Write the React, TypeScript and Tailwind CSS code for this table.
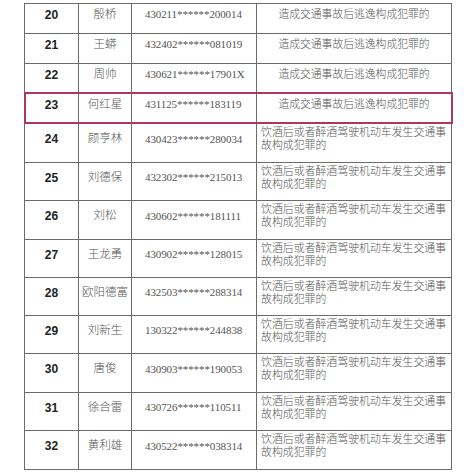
const serif = "font-['Liberation_Serif','Noto_Sans_CJK_SC',serif]";

type Row = { no: number; name: string; id: string; long: boolean; h: string; mark?: boolean };

const rows: Row[] = [
  { no: 20, name: "殷桥", id: "430211******200014", long: false, h: "h-[30px]" },
  { no: 21, name: "王蟒", id: "432402******081019", long: false, h: "h-[30px]" },
  { no: 22, name: "周帅", id: "430621******17901X", long: false, h: "h-[30px]" },
  { no: 23, name: "何红星", id: "431125******183119", long: false, h: "h-[30px]", mark: true },
  { no: 24, name: "颜亨林", id: "430423******280034", long: true, h: "h-[39px]" },
  { no: 25, name: "刘德保", id: "432302******215013", long: true, h: "h-[38px]" },
  { no: 26, name: "刘松", id: "430602******181111", long: true, h: "h-[39px]" },
  { no: 27, name: "王龙勇", id: "430902******128015", long: true, h: "h-[38px]" },
  { no: 28, name: "欧阳德富", id: "432503******288314", long: true, h: "h-[38px]" },
  { no: 29, name: "刘新生", id: "130322******244838", long: true, h: "h-[38px]" },
  { no: 30, name: "唐俊", id: "430903******190053", long: true, h: "h-[39px]" },
  { no: 31, name: "徐合雷", id: "430726******110511", long: true, h: "h-[38px]" },
  { no: 32, name: "黄利雄", id: "430522******038314", long: true, h: "h-[38px]" },
];

function TableRow({ r, last }: { r: Row; last: boolean }) {
  return (
    <div
      className={`relative grid grid-cols-[54px_53px_125px_194px] ${r.h} ${last ? "" : "border-b border-[#6b6b6b]"}`}
    >
      <div className="flex items-center justify-center border-r border-[#6b6b6b] pb-2 font-['Liberation_Sans',sans-serif] text-[12px] font-bold text-[#222]">
        {r.no}
      </div>
      <div className={`flex items-center justify-center border-r border-[#6b6b6b] pb-2 text-[11.5px] font-light text-[#555] ${serif}`}>
        {r.name}
      </div>
      <div className={`flex items-center border-r border-[#6b6b6b] pb-2 pl-[13px] text-[11px] tracking-[-0.1px] text-[#555] ${serif}`}>
        {r.id}
      </div>
      {r.long ? (
        <div className={`flex flex-col justify-center pb-2 pl-[4px] text-[10.9px] leading-[13px] font-light text-[#555] ${serif}`}>
          <span>饮酒后或者醉酒驾驶机动车发生交通事</span>
          <span>故构成犯罪的</span>
        </div>
      ) : (
        <div className={`flex items-center justify-center pb-2 text-[10.8px] font-light text-[#555] ${serif}`}>
          造成交通事故后逃逸构成犯罪的
        </div>
      )}
      {r.mark && (
        <div className="pointer-events-none absolute -top-[2px] -bottom-[1px] -left-[1px] -right-[2px] border-[2.5px] border-[#ab3862]" />
      )}
    </div>
  );
}

export default function App() {
  return (
    <div className="h-[474px] w-[474px] overflow-hidden bg-white pt-[3px]">
      <div className="ml-[24px] w-[428px] border border-[#6b6b6b]">
        {rows.map((r, i) => (
          <TableRow key={r.no} r={r} last={i === rows.length - 1} />
        ))}
      </div>
    </div>
  );
}
